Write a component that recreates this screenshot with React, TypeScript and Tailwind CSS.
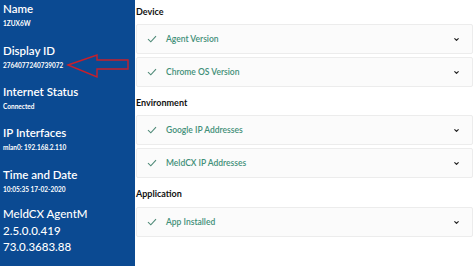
import { ChevronDown } from 'lucide-react';

const font = { fontFamily: 'Lato, "Open Sans", sans-serif' };

function InfoGroup({ title, value, className }: { title: string; value: string; className?: string }) {
  return (
    <div className={className}>
      <div className="text-[11.5px] leading-[16px] font-semibold text-white">{title}</div>
      <div className="mt-[2px] text-[6.5px] leading-[10px] font-bold text-white">{value}</div>
    </div>
  );
}

function CheckCard({ label, className }: { label: string; className?: string }) {
  return (
    <div
      className={`flex h-[30px] items-center rounded-[2px] border border-[#ececec] bg-[#fbfbfb] pl-[10px] pr-[12px] ${className ?? ''}`}
    >
      <svg width="10" height="8" viewBox="0 0 10 8" className="shrink-0">
        <path d="M1 4.2 L3.8 6.8 L9 1.2" fill="none" stroke="#4f8a78" strokeWidth="1.1" />
      </svg>
      <span className="ml-[9px] text-[8.5px] font-semibold text-[#3f8f78]">{label}</span>
      <ChevronDown className="ml-auto h-[7px] w-[7px] text-[#222]" strokeWidth={4} />
    </div>
  );
}

function SectionLabel({ children, className }: { children: string; className?: string }) {
  return <div className={`text-[9px] leading-[12px] font-bold text-[#111] ${className ?? ''}`}>{children}</div>;
}

export default function App() {
  return (
    <div className="flex h-[266px] w-[474px] overflow-hidden bg-white" style={font}>
      <aside className="relative w-[135px] shrink-0 bg-[#0b4a92] pl-[3px] pt-[1px]">
        <InfoGroup title="Name" value="1ZUX6W" />
        <InfoGroup title="Display ID" value="2764077240739072" className="mt-[14px]" />
        <InfoGroup title="Internet Status" value="Connected" className="mt-[13px]" />
        <InfoGroup title="IP Interfaces" value="mlan0: 192.168.2.110" className="mt-[13px]" />
        <InfoGroup title="Time and Date" value="10:05:35 17-02-2020" className="mt-[14px]" />
        <div className="mt-[11px] text-[11.5px] leading-[16.5px] font-medium text-white">
          <div>MeldCX AgentM</div>
          <div>2.5.0.0.419</div>
          <div>73.0.3683.88</div>
        </div>
        <svg className="absolute left-0 top-0" width="135" height="90" viewBox="0 0 135 90">
          <path
            d="M68 65 L97 55 L97 60 L128 60 L128 69 L97 69 L97 77 Z"
            fill="none"
            stroke="#c8202b"
            strokeWidth="1.4"
            strokeLinejoin="miter"
          />
        </svg>
      </aside>
      <main className="flex-1 pl-[1px] pr-[1px]">
        <SectionLabel className="mt-[6px]">Device</SectionLabel>
        <CheckCard label="Agent Version" className="mt-[6px]" />
        <CheckCard label="Chrome OS Version" className="mt-[3px]" />
        <SectionLabel className="mt-[10px]">Environment</SectionLabel>
        <CheckCard label="Google IP Addresses" className="mt-[6px]" />
        <CheckCard label="MeldCX IP Addresses" className="mt-[3px]" />
        <SectionLabel className="mt-[10px]">Application</SectionLabel>
        <CheckCard label="App Installed" className="mt-[7px]" />
      </main>
    </div>
  );
}
